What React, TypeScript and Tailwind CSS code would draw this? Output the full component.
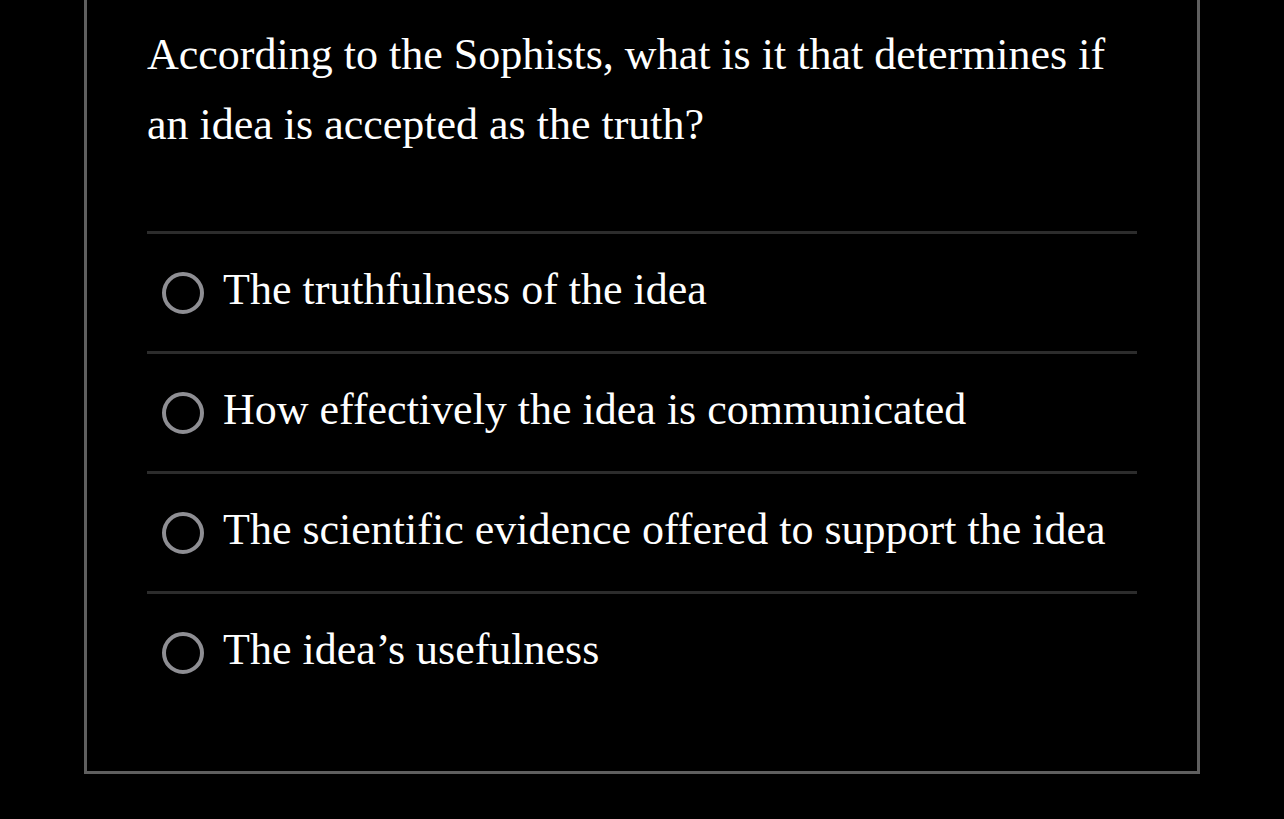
const QUESTION =
  "According to the Sophists, what is it that determines if an idea is accepted as the truth?";

const OPTIONS = [
  "The truthfulness of the idea",
  "How effectively the idea is communicated",
  "The scientific evidence offered to support the idea",
  "The idea\u2019s usefulness",
];

function Radio() {
  return (
    <span className="ml-[15px] mr-[19px] block h-[42px] w-[42px] shrink-0 rounded-full border-4 border-[#8e8e93]" />
  );
}

export default function App() {
  return (
    <div className="min-h-screen bg-black font-['Liberation_Serif','Times_New_Roman',serif] text-white">
      <div className="ml-[84px] w-[1116px] border-x-[3px] border-b-[3px] border-[#5f5f5f] px-[60px] pb-[60px] pt-[20px]">
        <p className="text-[44px] leading-[70px]">{QUESTION}</p>
        <div className="mt-[71px]">
          {OPTIONS.map((opt) => (
            <label
              key={opt}
              className="flex h-[120px] items-center border-t-[3px] border-[#2c2c2c]"
            >
              <Radio />
              <span className="mb-[6px] text-[44px] leading-none">{opt}</span>
            </label>
          ))}
        </div>
      </div>
    </div>
  );
}
